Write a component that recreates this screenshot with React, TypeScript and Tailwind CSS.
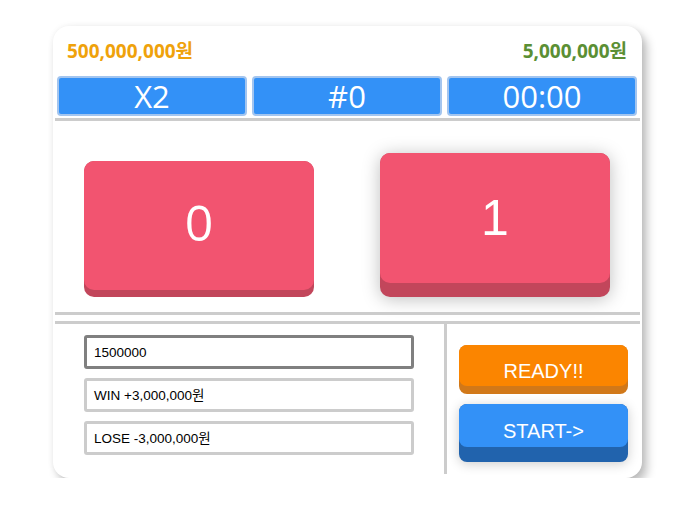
import React from "react";

export default function App() {
  const box =
    "flex-1 h-[40px] rounded-[4px] border-2 border-[#a3c5ef] bg-[#3391f7] text-white text-[31px] leading-none flex items-center justify-center font-['Open_Sans','Noto_Sans',sans-serif]";
  const input =
    "w-[330px] h-[34px] rounded-[3px] border-[3px] pl-[7px] pt-[2px] flex items-center";
  return (
    <div className="pt-[26px] pl-[53px]">
      <div className="w-[589px] h-[452px] rounded-[16px] bg-white shadow-[0_0_6px_rgba(0,0,0,0.06),5px_6px_10px_rgba(0,0,0,0.25)] flex flex-col">
        {/* header */}
        <div className="h-[50px] pl-[14px] pr-[15px] flex items-center justify-between font-['Open_Sans','Noto_Sans_CJK_KR',sans-serif] font-bold text-[19px]">
          <span className="text-[#efa20b]">500,000,000원</span>
          <span className="text-[#5b8f34]">5,000,000원</span>
        </div>
        {/* blue row */}
        <div className="h-[40px] pl-[4px] pr-[5px] flex gap-[5px]">
          <div className={box}>X2</div>
          <div className={box}>#0</div>
          <div className={box}>00:00</div>
        </div>
        <div className="mt-[2px] mx-[2px] h-[3px] bg-[#cccccc]" />
        {/* game area */}
        <div className="h-[191px] pl-[31px] pr-[32px] pb-[15px] flex items-end justify-between">
          <div className="w-[230px] rounded-[10px] bg-[#c2465b] pb-[7px]">
            <div className="h-[129px] rounded-[10px] bg-[#f25470] flex items-center justify-center pb-[7px] text-white text-[50px] leading-none font-['Open_Sans',sans-serif]">
              0
            </div>
          </div>
          <div className="w-[230px] rounded-[10px] bg-[#c2465b] pb-[14px] shadow-[0_2px_18px_rgba(0,0,0,0.26)]">
            <div className="h-[130px] rounded-[10px] bg-[#f25470] flex items-center justify-center text-white text-[50px] leading-none font-['Liberation_Sans',Arial,sans-serif]">
              1
            </div>
          </div>
        </div>
        <div className="mx-[2px] h-[3px] bg-[#cccccc]" />
        <div className="mt-[6px] mx-[2px] h-[3px] bg-[#cccccc]" />
        {/* bottom */}
        <div className="flex">
          <div className="w-[394px] h-[150px] border-r-[3px] border-[#cccccc] pl-[31px] pt-[11px] flex flex-col gap-[9px] font-['Liberation_Sans','Noto_Sans_CJK_KR',Arial,sans-serif] text-[13.5px] text-black">
            <div className={`${input} border-[#808080]`}>1500000</div>
            <div className={`${input} border-[#cccccc]`}>WIN +3,000,000원</div>
            <div className={`${input} border-[#cccccc]`}>LOSE -3,000,000원</div>
          </div>
          <div className="pl-[12px] pt-[21px] flex flex-col gap-[10px] font-['Liberation_Sans',Arial,sans-serif] text-white text-[20px]">
            <div className="w-[169px] rounded-[8px] bg-[#d17819] pb-[8px]">
              <div className="h-[41px] rounded-[8px] bg-[#fb8500] flex items-center justify-center pt-[11px]">
                READY!!
              </div>
            </div>
            <div className="w-[169px] rounded-[8px] bg-[#2163ad] pb-[15px] shadow-[0_2px_12px_rgba(0,0,0,0.2)]">
              <div className="h-[43px] rounded-[8px] bg-[#3391f7] flex items-center justify-center pt-[11px]">
                START-&gt;
              </div>
            </div>
          </div>
        </div>
      </div>
    </div>
  );
}
